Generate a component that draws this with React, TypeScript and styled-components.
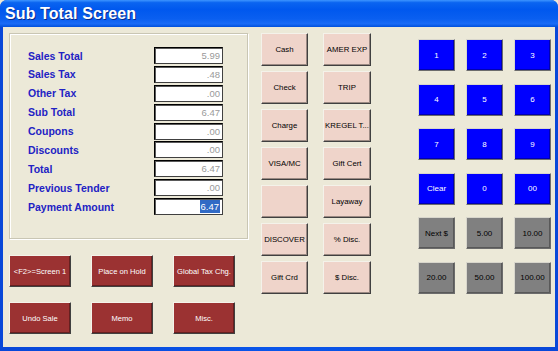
import React from "react";
import styled, { createGlobalStyle } from "styled-components";

const Global = createGlobalStyle`
  html, body { margin: 0; padding: 0; background: #ECE9D8; }
  body { font-family: "Liberation Sans", Arial, sans-serif; }
  #root { width: 558px; height: 351px; }
`;

const Window = styled.div`
  width: 558px;
  height: 351px;
  box-sizing: border-box;
  display: flex;
  flex-direction: column;
  background: #0842d8;
  border-radius: 7px 7px 0 0;
  overflow: hidden;
`;

const TitleBar = styled.div`
  height: 27px;
  flex: none;
  display: flex;
  align-items: center;
  padding-left: 5px;
  background: linear-gradient(
    180deg,
    #3d95ff 0%,
    #0a64f0 10%,
    #0058ee 35%,
    #0a5ff0 70%,
    #1a6cf6 88%,
    #0050dc 100%
  );
  color: #fff;
  font-family: "Liberation Sans", Arial, sans-serif;
  font-weight: bold;
  font-size: 16px;
  text-shadow: 1px 1px 0 #0a2a8a;
  letter-spacing: 0.1px;
`;

const Frame = styled.div`
  flex: 1;
  display: flex;
  padding: 0 3px 4px 3px;
  background: linear-gradient(90deg, #0847d8, #0a56ea 50%, #0847d8);
  min-height: 0;
`;

const Body = styled.div`
  flex: 1;
  background: #ECE9D8;
  display: flex;
  align-items: flex-start;
  padding: 6px 0 0 6px;
`;

const LeftCol = styled.div`
  display: flex;
  flex-direction: column;
  gap: 16px;
`;

const GroupBox = styled.div`
  width: 239px;
  height: 206px;
  box-sizing: border-box;
  border: 1px solid #c9c6b4;
  box-shadow: inset 1px 1px 0 #fff, 1px 1px 0 #fff;
  padding: 13px 0 0 18px;
  display: grid;
  grid-template-columns: 126px 69px;
  grid-auto-rows: 17px;
  row-gap: 1.9px;
  align-content: start;
`;

const Label = styled.div`
  color: #2222c4;
  font-weight: bold;
  font-size: 10.5px;
  display: flex;
  align-items: center;
`;

const Field = styled.div`
  box-sizing: border-box;
  background: #fff;
  border: 1px solid #000;
  border-bottom-color: #404040;
  border-right-color: #404040;
  box-shadow: inset 1px 1px 0 #5a5a5a;
  display: flex;
  align-items: center;
  justify-content: flex-end;
  padding-right: 2px;
  font-size: 9.5px;
  color: #9a9a9a;
`;

const Selected = styled.span`
  background: #316ac5;
  color: #fff;
  padding: 0 1px;
  line-height: 13px;
`;

const RedGrid = styled.div`
  display: grid;
  grid-template-columns: repeat(3, 62px);
  grid-auto-rows: 32px;
  column-gap: 20px;
  row-gap: 15px;
`;

const Btn = styled.button<{ $bg: string; $fg: string; $size?: number }>`
  box-sizing: border-box;
  margin: 0;
  padding: 0;
  width: 100%;
  height: 100%;
  background: ${(p) => p.$bg};
  color: ${(p) => p.$fg};
  font-family: "Liberation Sans", Arial, sans-serif;
  font-size: ${(p) => p.$size ?? 8}px;
  border: 1px solid;
  border-color: #f4f2ea #404040 #404040 #f4f2ea;
  box-shadow: inset -1px -1px 0 rgba(0, 0, 0, 0.35);
  white-space: nowrap;
  overflow: hidden;
  display: flex;
  align-items: center;
  justify-content: center;
  cursor: default;
`;

const PinkGrid = styled.div`
  margin-left: 13px;
  display: grid;
  grid-template-columns: 47px 48px;
  grid-auto-rows: 33px;
  column-gap: 15px;
  row-gap: 5px;
`;

const KeyGrid = styled.div`
  margin-left: 47px;
  margin-top: 6px;
  display: grid;
  grid-template-columns: repeat(3, 37px);
  grid-auto-rows: 32px;
  column-gap: 11px;
  row-gap: 12.6px;
`;

const KeyBtn = styled(Btn)`
  border-color: #d8d6cc #6c6c6c #6c6c6c #d8d6cc;
  box-shadow: inset -1px -1px 0 rgba(0, 0, 0, 0.3);
`;

const rows: [string, string][] = [
  ["Sales Total", "5.99"],
  ["Sales Tax", ".48"],
  ["Other Tax", ".00"],
  ["Sub Total", "6.47"],
  ["Coupons", ".00"],
  ["Discounts", ".00"],
  ["Total", "6.47"],
  ["Previous Tender", ".00"],
];

const red = ["<F2>=Screen 1", "Place on Hold", "Global Tax Chg.", "Undo Sale", "Memo", "Misc."];

const pink = [
  "Cash",
  "AMER EXP",
  "Check",
  "TRIP",
  "Charge",
  "KREGEL T...",
  "VISA/MC",
  "Gift Cert",
  "",
  "Layaway",
  "DISCOVER",
  "% Disc.",
  "Gift Crd",
  "$ Disc.",
];

const blue = ["1", "2", "3", "4", "5", "6", "7", "8", "9", "Clear", "0", "00"];
const grey = ["Next $", "5.00", "10.00", "20.00", "50.00", "100.00"];

export default function App() {
  return (
    <>
      <Global />
      <Window>
        <TitleBar>Sub Total Screen</TitleBar>
        <Frame>
          <Body>
            <LeftCol>
              <GroupBox>
                {rows.map(([l, v]) => (
                  <React.Fragment key={l}>
                    <Label>{l}</Label>
                    <Field>{v}</Field>
                  </React.Fragment>
                ))}
                <Label>Payment Amount</Label>
                <Field>
                  <Selected>6.47</Selected>
                </Field>
              </GroupBox>
              <RedGrid>
                {red.map((t) => (
                  <Btn key={t} $bg="#9b3232" $fg="#fff" $size={7.6}>
                    {t}
                  </Btn>
                ))}
              </RedGrid>
            </LeftCol>
            <PinkGrid>
              {pink.map((t, i) => (
                <Btn key={i} $bg="#efd4ca" $fg="#000" $size={7.8}>
                  {t}
                </Btn>
              ))}
            </PinkGrid>
            <KeyGrid>
              {blue.map((t) => (
                <KeyBtn key={t} $bg="#0000ff" $fg="#fff" $size={8}>
                  {t}
                </KeyBtn>
              ))}
              {grey.map((t) => (
                <KeyBtn key={t} $bg="#808080" $fg="#000" $size={8}>
                  {t}
                </KeyBtn>
              ))}
            </KeyGrid>
          </Body>
        </Frame>
      </Window>
    </>
  );
}
